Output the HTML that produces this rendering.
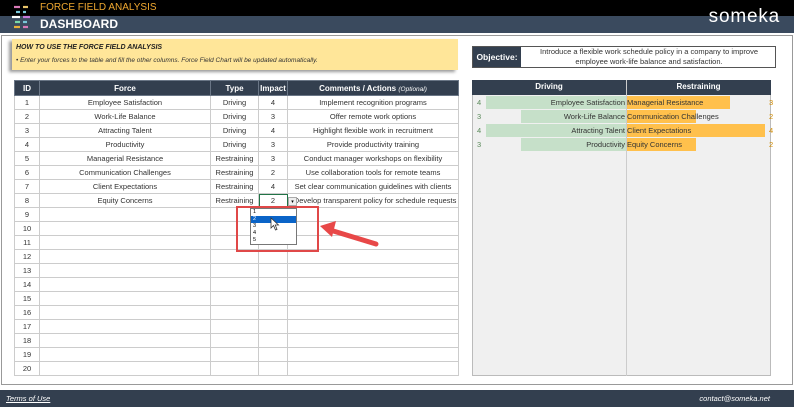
<!DOCTYPE html>
<html><head><meta charset="utf-8"><style>
*{margin:0;padding:0;box-sizing:border-box}
body{width:794px;height:407px;background:#fff;font-family:"Liberation Sans",sans-serif;position:relative;overflow:hidden}
.a{position:absolute}
table{border-collapse:collapse;position:absolute;left:14px;top:80px;font-size:7.5px;color:#333}
td,th{border:1px solid #ccc;height:14px;text-align:center;padding:0}
th{background:#333f4f;color:#fff;font-weight:bold;height:15px;border-color:#6a7686;font-size:8px}
.bar{position:absolute;height:13px;font-size:7.5px;line-height:13px;color:#333}
</style></head><body>
<div class="a" style="left:0;top:0;width:794px;height:16px;background:#000"></div>
<div class="a" style="left:0;top:16px;width:794px;height:17px;background:#3a4a5e"></div>
<div class="a" style="left:40px;top:2px;font-size:10px;color:#f0a830">FORCE FIELD ANALYSIS</div>
<div class="a" style="left:40px;top:17px;font-size:12px;color:#fff;font-weight:bold">DASHBOARD</div>
<svg class="a" style="left:10px;top:3px" width="26" height="26"><g stroke-width="2.2">
<line x1="4" y1="4" x2="10" y2="4" stroke="#d97ab8"/><line x1="13" y1="4" x2="18" y2="4" stroke="#e8c56a"/>
<line x1="6" y1="9" x2="10" y2="9" stroke="#7ac8d9"/><line x1="13" y1="9" x2="16" y2="9" stroke="#7ac8d9"/>
<line x1="2" y1="14" x2="10" y2="14" stroke="#fff"/><line x1="13" y1="14" x2="20" y2="14" stroke="#c57ad9"/>
<line x1="5" y1="19" x2="10" y2="19" stroke="#7ad9a8"/><line x1="13" y1="19" x2="17" y2="19" stroke="#7ac8d9"/>
<line x1="4" y1="24" x2="10" y2="24" stroke="#e8b13a"/><line x1="13" y1="24" x2="18" y2="24" stroke="#d97ab8"/></g></svg>
<div class="a" style="right:14px;top:6px;font-size:19px;color:#fff;letter-spacing:0.8px">someka</div>
<div class="a" style="left:1px;top:35px;width:792px;height:350px;border:1px solid #999"></div>
<div class="a" style="left:12px;top:39px;width:446px;height:31px;background:#ffe699;box-shadow:-3px 2px 3px #999"></div>
<div class="a" style="left:16px;top:44px;font-size:7px;font-weight:bold;font-style:italic;color:#222">HOW TO USE THE FORCE FIELD ANALYSIS</div>
<div class="a" style="left:16px;top:57px;font-size:6.5px;font-style:italic;color:#333">• Enter your forces to the table and fill the other columns. Force Field Chart will be updated automatically.</div>
<div class="a" style="left:472px;top:46px;width:304px;height:22px;border:1px solid #555;background:#fff"></div>
<div class="a" style="left:473px;top:47px;width:48px;height:20px;background:#333f4f;color:#fff;font-weight:bold;font-size:8.5px;line-height:20px;text-align:center">Objective:</div>
<div class="a" style="left:524px;top:47px;width:250px;font-size:7.5px;line-height:10px;text-align:center;color:#333">Introduce a flexible work schedule policy in a company to improve employee work-life balance and satisfaction.</div>
<table>
<tr><th style="width:25px">ID</th><th style="width:171px">Force</th><th style="width:48px">Type</th><th style="width:29px">Impact</th><th style="width:171px">Comments / Actions <i style="font-weight:normal;font-size:6.5px">(Optional)</i></th></tr>
<tr><td>1</td><td>Employee Satisfaction</td><td>Driving</td><td>4</td><td>Implement recognition programs</td></tr>
<tr><td>2</td><td>Work-Life Balance</td><td>Driving</td><td>3</td><td>Offer remote work options</td></tr>
<tr><td>3</td><td>Attracting Talent</td><td>Driving</td><td>4</td><td>Highlight flexible work in recruitment</td></tr>
<tr><td>4</td><td>Productivity</td><td>Driving</td><td>3</td><td>Provide productivity training</td></tr>
<tr><td>5</td><td>Managerial Resistance</td><td>Restraining</td><td>3</td><td>Conduct manager workshops on flexibility</td></tr>
<tr><td>6</td><td>Communication Challenges</td><td>Restraining</td><td>2</td><td>Use collaboration tools for remote teams</td></tr>
<tr><td>7</td><td>Client Expectations</td><td>Restraining</td><td>4</td><td>Set clear communication guidelines with clients</td></tr>
<tr><td>8</td><td>Equity Concerns</td><td>Restraining</td><td style="outline:1px solid #217346;outline-offset:-1px">2</td><td>&nbsp;&nbsp;Develop transparent policy for schedule requests</td></tr>
<tr><td>9</td><td></td><td></td><td></td><td></td></tr><tr><td>10</td><td></td><td></td><td></td><td></td></tr>
<tr><td>11</td><td></td><td></td><td></td><td></td></tr><tr><td>12</td><td></td><td></td><td></td><td></td></tr>
<tr><td>13</td><td></td><td></td><td></td><td></td></tr><tr><td>14</td><td></td><td></td><td></td><td></td></tr>
<tr><td>15</td><td></td><td></td><td></td><td></td></tr><tr><td>16</td><td></td><td></td><td></td><td></td></tr>
<tr><td>17</td><td></td><td></td><td></td><td></td></tr><tr><td>18</td><td></td><td></td><td></td><td></td></tr>
<tr><td>19</td><td></td><td></td><td></td><td></td></tr><tr><td>20</td><td></td><td></td><td></td><td></td></tr>
</table>
<div class="a" style="left:288px;top:197px;width:9px;height:9px;background:#eee;border:1px solid #aaa;font-size:5px;line-height:8px;text-align:center">▾</div>
<div class="a" style="left:472px;top:80px;width:299px;height:296px;background:#f0f0f0;border:1px solid #bbb"></div>
<div class="a" style="left:472px;top:80px;width:299px;height:15px;background:#333f4f"></div>
<div class="a" style="left:472px;top:82px;width:154px;text-align:center;color:#fff;font-weight:bold;font-size:8px">Driving</div>
<div class="a" style="left:626px;top:82px;width:145px;text-align:center;color:#fff;font-weight:bold;font-size:8px">Restraining</div>
<div class="a" style="left:626px;top:80px;width:1px;height:296px;background:#ccc"></div>
<div class="bar" style="left:486px;top:96px;width:140px;background:#c6e0c9;text-align:right;padding-right:1px">Employee Satisfaction</div>
<div class="bar" style="left:521px;top:110px;width:105px;background:#c6e0c9;text-align:right;padding-right:1px">Work-Life Balance</div>
<div class="bar" style="left:486px;top:124px;width:140px;background:#c6e0c9;text-align:right;padding-right:1px">Attracting Talent</div>
<div class="bar" style="left:521px;top:138px;width:105px;background:#c6e0c9;text-align:right;padding-right:1px">Productivity</div>
<div class="bar" style="left:627px;top:96px;width:103px;background:#ffc04c;white-space:nowrap">Managerial Resistance</div>
<div class="bar" style="left:627px;top:110px;width:69px;background:#ffc04c;white-space:nowrap">Communication Challenges</div>
<div class="bar" style="left:627px;top:124px;width:138px;background:#ffc04c;white-space:nowrap">Client Expectations</div>
<div class="bar" style="left:627px;top:138px;width:69px;background:#ffc04c;white-space:nowrap">Equity Concerns</div>
<div class="bar" style="left:477px;top:96px;color:#5a8a5a">4</div><div class="bar" style="left:477px;top:110px;color:#5a8a5a">3</div>
<div class="bar" style="left:477px;top:124px;color:#5a8a5a">4</div><div class="bar" style="left:477px;top:138px;color:#5a8a5a">3</div>
<div class="bar" style="left:769px;top:96px;color:#d08a00">3</div><div class="bar" style="left:769px;top:110px;color:#d08a00">2</div>
<div class="bar" style="left:769px;top:124px;color:#d08a00">4</div><div class="bar" style="left:769px;top:138px;color:#d08a00">2</div>
<div class="a" style="left:250px;top:208px;width:47px;height:37px;background:#fff;border:1px solid #777;font-size:5.5px;line-height:7px;padding-left:2px">1<br><span style="display:block;background:#0a64c8;color:#fff;margin-left:-2px;padding-left:2px">2</span>3<br>4<br>5</div>
<svg class="a" style="left:270px;top:217px" width="12" height="14"><path d="M1 1 L1 11 L3.5 8.5 L5.5 13 L7 12.4 L5.2 8 L8.5 8 Z" fill="#fff" stroke="#333" stroke-width="0.8"/></svg>
<div class="a" style="left:236px;top:206px;width:83px;height:46px;border:2px solid #e04848"></div>
<svg class="a" style="left:318px;top:218px" width="62" height="30"><line x1="58" y1="26" x2="12" y2="12" stroke="#e84848" stroke-width="5" stroke-linecap="round"/><path d="M2 8 L18 3 L14 19 Z" fill="#e84848"/></svg>
<div class="a" style="left:0;top:390px;width:794px;height:17px;background:#333f4f"></div>
<div class="a" style="left:6px;top:394px;font-size:7.5px;font-style:italic;text-decoration:underline;color:#fff">Terms of Use</div>
<div class="a" style="right:24px;top:394px;font-size:7.5px;font-style:italic;color:#fff">contact@someka.net</div>
</body></html>
